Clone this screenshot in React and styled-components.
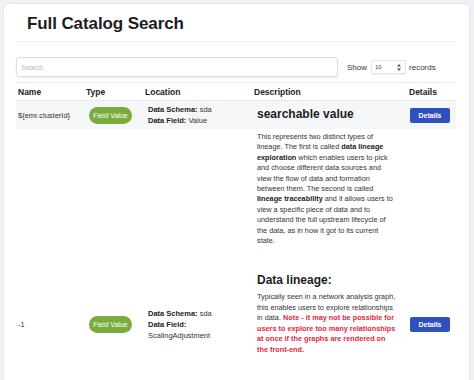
import styled, { createGlobalStyle } from 'styled-components';

const GlobalStyle = createGlobalStyle`
  html, body {
    margin: 0;
    padding: 0;
    background: #eff1f4;
  }
  body {
    font-family: 'Liberation Sans', Arial, sans-serif;
    color: #333;
  }
`;

const Page = styled.div`
  height: 380px;
  overflow: hidden;
  box-sizing: border-box;
  padding: 3px 4px 0 3px;
`;

const Card = styled.div`
  background: #fff;
  border: 1px solid #e4e6ea;
  border-radius: 6px;
  padding: 9px 13px 0 12px;
  min-height: 600px;
`;

const Title = styled.h1`
  margin: 0;
  padding-left: 11px;
  font-size: 17px;
  line-height: 21px;
  font-weight: 700;
  letter-spacing: -0.1px;
  color: #1d1d1f;
`;

const Rule = styled.div`
  margin-top: 7px;
  height: 1px;
  background: #eceef1;
`;

const Toolbar = styled.div`
  display: flex;
  align-items: center;
  margin-top: 15px;
  font-size: 8px;
  color: #333;
`;

const SearchInput = styled.input`
  box-sizing: border-box;
  width: 322px;
  height: 20px;
  border: 1px solid #dadde2;
  border-radius: 3px;
  box-shadow: 0 1px 2px rgba(0, 0, 0, 0.08);
  padding: 0 4px;
  font-family: inherit;
  font-size: 7px;
  outline: none;

  &::placeholder {
    color: #b5b9c0;
  }
`;

const ShowLabel = styled.span`
  margin-left: 9px;
`;

const Select = styled.div`
  box-sizing: border-box;
  display: flex;
  align-items: center;
  justify-content: space-between;
  width: 35px;
  height: 14px;
  margin: 0 3px 0 4px;
  padding: 0 4px 0 3px;
  border: 1px solid #e1e3e7;
  border-radius: 2px;
  box-shadow: 0 1px 1px rgba(0, 0, 0, 0.06);
  font-size: 6px;
  color: #444;
`;

const Table = styled.table`
  margin-top: 5px;
  width: 440px;
  table-layout: fixed;
  border-collapse: collapse;
`;

const Th = styled.th`
  height: 17px;
  padding: 0 2px;
  text-align: left;
  vertical-align: middle;
  font-size: 8.5px;
  font-weight: 700;
  color: #222;
  border-top: 1px solid #eceef1;
  border-bottom: 1px solid #e4e6ea;
`;

const Row = styled.tr`
  background: ${(p) => (p.$striped ? '#f5f6f8' : 'transparent')};
`;

const Td = styled.td`
  height: ${(p) => p.$height || 'auto'};
  padding: ${(p) => p.$pad || '0 2px'};
  vertical-align: middle;
  font-size: 7.5px;
  line-height: 11px;
  color: #333;
`;

const Badge = styled.span`
  display: inline-flex;
  align-items: center;
  justify-content: center;
  width: 43px;
  height: 17px;
  border-radius: 9px;
  background: #7aab3e;
  color: #fff;
  font-size: 7px;
`;

const Label = styled.b`
  font-weight: 700;
  color: #222;
`;

const DetailsButton = styled.button`
  width: 40px;
  height: 15px;
  padding: 0;
  border: none;
  border-radius: 2px;
  background: #2f50bd;
  color: #fff;
  font-family: inherit;
  font-size: 7px;
  font-weight: 700;
`;

const Heading = styled.h3`
  margin: ${(p) => p.$margin || '0'};
  font-size: 12px;
  line-height: 15px;
  font-weight: 700;
  color: #1d1d1f;
`;

const Para = styled.p`
  margin: 0;
  width: 140px;
  font-size: 7.3px;
  line-height: 10.4px;
  color: #333;

  b {
    color: #222;
  }
`;

const Note = styled.b`
  color: #e3263c !important;
`;

function SortArrows() {
  return (
    <svg width="4" height="7" viewBox="0 0 4 7">
      <path d="M2 0 L4 2.6 L0 2.6 Z M2 7 L4 4.4 L0 4.4 Z" fill="#555" />
    </svg>
  );
}

export default function App() {
  return (
    <Page>
      <GlobalStyle />
      <Card>
        <Title>Full Catalog Search</Title>
        <Rule />
        <Toolbar>
          <SearchInput placeholder="Search" />
          <ShowLabel>Show</ShowLabel>
          <Select>
            <span>10</span>
            <SortArrows />
          </Select>
          <span>records</span>
        </Toolbar>
        <Table>
          <colgroup>
            <col style={{ width: 68 }} />
            <col style={{ width: 59 }} />
            <col style={{ width: 109 }} />
            <col style={{ width: 155 }} />
            <col style={{ width: 49 }} />
          </colgroup>
          <thead>
            <tr>
              <Th>Name</Th>
              <Th>Type</Th>
              <Th>Location</Th>
              <Th>Description</Th>
              <Th>Details</Th>
            </tr>
          </thead>
          <tbody>
            <Row $striped>
              <Td $height="28px">{'${emr.clusterId}'}</Td>
              <Td $pad="0 2px 0 5px"><Badge>Field Value</Badge></Td>
              <Td $pad="0 2px 0 5px">
                <div><Label>Data Schema:</Label> sda</div>
                <div><Label>Data Field:</Label> Value</div>
              </Td>
              <Td $pad="0 2px 2px 5px">
                <Heading>searchable value</Heading>
              </Td>
              <Td $pad="0 2px 0 3px"><DetailsButton>Details</DetailsButton></Td>
            </Row>
            <Row>
              <Td>-1</Td>
              <Td $pad="0 2px 0 5px"><Badge>Field Value</Badge></Td>
              <Td $pad="0 2px 0 5px">
                <div><Label>Data Schema:</Label> sda</div>
                <div><Label>Data Field:</Label></div>
                <div>ScalingAdjustment</div>
              </Td>
              <Td $pad="3px 2px 166px 5px">
                <Para>
                  This represents two distinct types of lineage. The first is called <b>data lineage exploration</b> which
                  enables users to pick and choose different data sources and view the flow of data and formation between
                  them. The second is called <b>lineage traceability</b> and it allows users to view a specific piece of
                  data and to understand the full upstream lifecycle of the data, as in how it got to its current state.
                </Para>
                <Heading $margin="27px 0 4px">Data lineage:</Heading>
                <Para>
                  Typically seen in a network analysis graph, this enables users to explore relationships in data.{' '}
                  <Note>
                    Note - it may not be possible for users to explore too many relationships at once if the graphs are
                    rendered on the front-end.
                  </Note>
                </Para>
              </Td>
              <Td $pad="0 2px 0 3px"><DetailsButton>Details</DetailsButton></Td>
            </Row>
          </tbody>
        </Table>
      </Card>
    </Page>
  );
}
